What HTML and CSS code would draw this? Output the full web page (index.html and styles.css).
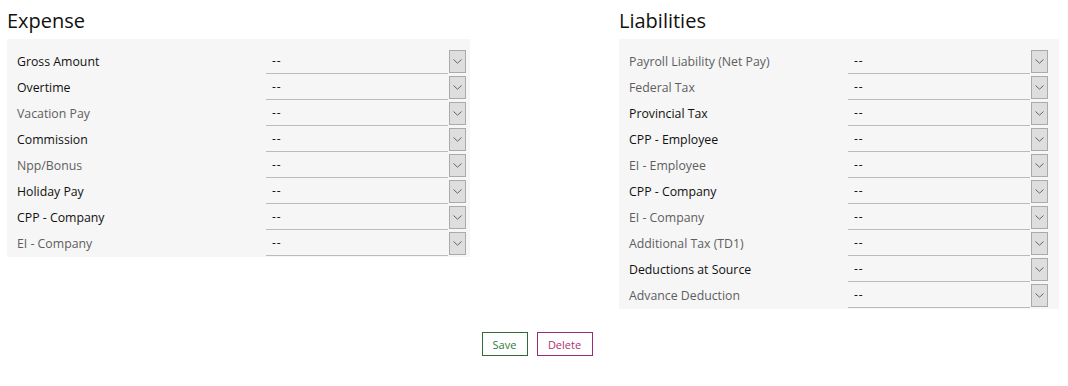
FILE: index.html
```html
<!DOCTYPE html>
<html lang="en">
<head>
    <meta charset="UTF-8">
    <title>Account Mapping</title>
    <link rel="stylesheet" href="styles.css">
</head>
<body>
    <div class="columns">
        <div class="col col-left">
            <h2>Expense</h2>
            <div class="panel panel-left">
                <div class="row"><span class="lbl dark">Gross Amount</span><div class="sel"><span class="val">--</span><span class="arrow"><svg width="9" height="5" viewBox="0 0 9 5"><path d="M0.5 0.5 L4.5 4.2 L8.5 0.5" fill="none" stroke="#666" stroke-width="1"/></svg></span></div></div>
                <div class="row"><span class="lbl dark">Overtime</span><div class="sel"><span class="val">--</span><span class="arrow"><svg width="9" height="5" viewBox="0 0 9 5"><path d="M0.5 0.5 L4.5 4.2 L8.5 0.5" fill="none" stroke="#666" stroke-width="1"/></svg></span></div></div>
                <div class="row"><span class="lbl">Vacation Pay</span><div class="sel"><span class="val">--</span><span class="arrow"><svg width="9" height="5" viewBox="0 0 9 5"><path d="M0.5 0.5 L4.5 4.2 L8.5 0.5" fill="none" stroke="#666" stroke-width="1"/></svg></span></div></div>
                <div class="row"><span class="lbl dark">Commission</span><div class="sel"><span class="val">--</span><span class="arrow"><svg width="9" height="5" viewBox="0 0 9 5"><path d="M0.5 0.5 L4.5 4.2 L8.5 0.5" fill="none" stroke="#666" stroke-width="1"/></svg></span></div></div>
                <div class="row"><span class="lbl">Npp/Bonus</span><div class="sel"><span class="val">--</span><span class="arrow"><svg width="9" height="5" viewBox="0 0 9 5"><path d="M0.5 0.5 L4.5 4.2 L8.5 0.5" fill="none" stroke="#666" stroke-width="1"/></svg></span></div></div>
                <div class="row"><span class="lbl dark">Holiday Pay</span><div class="sel"><span class="val">--</span><span class="arrow"><svg width="9" height="5" viewBox="0 0 9 5"><path d="M0.5 0.5 L4.5 4.2 L8.5 0.5" fill="none" stroke="#666" stroke-width="1"/></svg></span></div></div>
                <div class="row"><span class="lbl dark">CPP - Company</span><div class="sel"><span class="val">--</span><span class="arrow"><svg width="9" height="5" viewBox="0 0 9 5"><path d="M0.5 0.5 L4.5 4.2 L8.5 0.5" fill="none" stroke="#666" stroke-width="1"/></svg></span></div></div>
                <div class="row"><span class="lbl">EI - Company</span><div class="sel"><span class="val">--</span><span class="arrow"><svg width="9" height="5" viewBox="0 0 9 5"><path d="M0.5 0.5 L4.5 4.2 L8.5 0.5" fill="none" stroke="#666" stroke-width="1"/></svg></span></div></div>
            </div>
        </div>
        <div class="col col-right">
            <h2>Liabilities</h2>
            <div class="panel panel-right">
                <div class="row"><span class="lbl">Payroll Liability (Net Pay)</span><div class="sel"><span class="val">--</span><span class="arrow"><svg width="9" height="5" viewBox="0 0 9 5"><path d="M0.5 0.5 L4.5 4.2 L8.5 0.5" fill="none" stroke="#666" stroke-width="1"/></svg></span></div></div>
                <div class="row"><span class="lbl">Federal Tax</span><div class="sel"><span class="val">--</span><span class="arrow"><svg width="9" height="5" viewBox="0 0 9 5"><path d="M0.5 0.5 L4.5 4.2 L8.5 0.5" fill="none" stroke="#666" stroke-width="1"/></svg></span></div></div>
                <div class="row"><span class="lbl dark">Provincial Tax</span><div class="sel"><span class="val">--</span><span class="arrow"><svg width="9" height="5" viewBox="0 0 9 5"><path d="M0.5 0.5 L4.5 4.2 L8.5 0.5" fill="none" stroke="#666" stroke-width="1"/></svg></span></div></div>
                <div class="row"><span class="lbl dark">CPP - Employee</span><div class="sel"><span class="val">--</span><span class="arrow"><svg width="9" height="5" viewBox="0 0 9 5"><path d="M0.5 0.5 L4.5 4.2 L8.5 0.5" fill="none" stroke="#666" stroke-width="1"/></svg></span></div></div>
                <div class="row"><span class="lbl">EI - Employee</span><div class="sel"><span class="val">--</span><span class="arrow"><svg width="9" height="5" viewBox="0 0 9 5"><path d="M0.5 0.5 L4.5 4.2 L8.5 0.5" fill="none" stroke="#666" stroke-width="1"/></svg></span></div></div>
                <div class="row"><span class="lbl dark">CPP - Company</span><div class="sel"><span class="val">--</span><span class="arrow"><svg width="9" height="5" viewBox="0 0 9 5"><path d="M0.5 0.5 L4.5 4.2 L8.5 0.5" fill="none" stroke="#666" stroke-width="1"/></svg></span></div></div>
                <div class="row"><span class="lbl">EI - Company</span><div class="sel"><span class="val">--</span><span class="arrow"><svg width="9" height="5" viewBox="0 0 9 5"><path d="M0.5 0.5 L4.5 4.2 L8.5 0.5" fill="none" stroke="#666" stroke-width="1"/></svg></span></div></div>
                <div class="row"><span class="lbl">Additional Tax (TD1)</span><div class="sel"><span class="val">--</span><span class="arrow"><svg width="9" height="5" viewBox="0 0 9 5"><path d="M0.5 0.5 L4.5 4.2 L8.5 0.5" fill="none" stroke="#666" stroke-width="1"/></svg></span></div></div>
                <div class="row"><span class="lbl dark">Deductions at Source</span><div class="sel"><span class="val">--</span><span class="arrow"><svg width="9" height="5" viewBox="0 0 9 5"><path d="M0.5 0.5 L4.5 4.2 L8.5 0.5" fill="none" stroke="#666" stroke-width="1"/></svg></span></div></div>
                <div class="row"><span class="lbl">Advance Deduction</span><div class="sel"><span class="val">--</span><span class="arrow"><svg width="9" height="5" viewBox="0 0 9 5"><path d="M0.5 0.5 L4.5 4.2 L8.5 0.5" fill="none" stroke="#666" stroke-width="1"/></svg></span></div></div>
            </div>
        </div>
    </div>
    <div class="actions">
        <button class="btn btn-save">Save</button>
        <button class="btn btn-delete">Delete</button>
    </div>
</body>
</html>
```

FILE: styles.css
```css
body {
    margin: 0;
    padding: 0 7px;
    background: #fff;
    font-family: "Open Sans", Arial, sans-serif;
    color: #111;
}
.columns {
    display: flex;
}
.col-left {
    width: 612px;
}
h2 {
    margin: 0;
    padding-top: 9px;
    height: 39px;
    box-sizing: border-box;
    font-size: 20px;
    font-weight: normal;
    line-height: 24px;
    color: #111;
}
.panel {
    background: #f6f6f6;
    padding: 9px 4px 1px 10px;
}
.panel-left {
    width: 449px;
}
.panel-right {
    width: 419px;
    padding-right: 11px;
}
.row {
    display: flex;
    align-items: center;
    height: 26px;
}
.lbl {
    font-size: 12.3px;
    color: #5e5e5e;
    width: 249px;
    flex: none;
}
.panel-right .lbl {
    width: 219px;
}
.lbl.dark {
    color: #111;
}
.sel {
    display: flex;
    align-items: flex-end;
    width: 200px;
    height: 26px;
    box-sizing: border-box;
}
.val {
    flex: 1;
    height: 26px;
    box-sizing: border-box;
    border-bottom: 1px solid #bbb;
    padding: 0 6px;
    font-size: 12px;
    letter-spacing: 1px;
    line-height: 25px;
    margin-right: 1px;
}
.arrow {
    width: 17px;
    height: 23px;
    box-sizing: border-box;
    border: 1px solid #aaa;
    background: #dedede;
    margin-bottom: 1px;
    display: flex;
    align-items: center;
    justify-content: center;
}
.actions {
    display: flex;
    justify-content: center;
    gap: 9px;
    margin-top: 23px;
    padding-left: 6px;
}
.btn {
    background: #fff;
    font-family: "Open Sans", Arial, sans-serif;
    font-size: 11px;
    height: 24px;
    padding: 0 10px;
    cursor: pointer;
}
.btn-save {
    width: 46px;
    border: 1px solid #2e6b35;
    color: #2e7d3a;
}
.btn-delete {
    width: 56px;
    border: 1px solid #9b2a77;
    color: #b0306f;
}
```
